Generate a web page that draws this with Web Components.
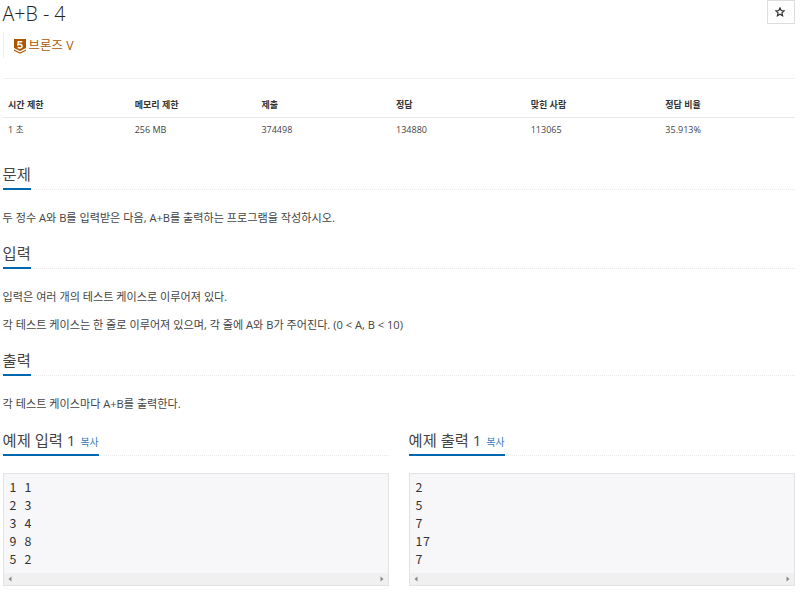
<!DOCTYPE html>
<html lang="ko">
<head>
<meta charset="utf-8">
<title>A+B - 4</title>
<style>
  body {
    margin: 0;
    background: #fff;
    color: #444;
    font-family: "Open Sans", "Noto Sans CJK KR", sans-serif;
    font-size: 10.5px;
  }
</style>
</head>
<body>
<problem-page>
  <problem-header slot="header" tier="브론즈 V">A+B - 4</problem-header>
  <problem-info slot="header"></problem-info>
  <problem-section heading="문제">
    <p>두 정수 A와 B를 입력받은 다음, A+B를 출력하는 프로그램을 작성하시오.</p>
  </problem-section>
  <problem-section heading="입력">
    <p>입력은 여러 개의 테스트 케이스로 이루어져 있다.</p>
    <p>각 테스트 케이스는 한 줄로 이루어져 있으며, 각 줄에 A와 B가 주어진다. (0 &lt; A, B &lt; 10)</p>
  </problem-section>
  <problem-section heading="출력">
    <p>각 테스트 케이스마다 A+B를 출력한다.</p>
  </problem-section>
  <sample-data slot="samples" heading="예제 입력 1">1 1
2 3
3 4
9 8
5 2</sample-data>
  <sample-data slot="samples" heading="예제 출력 1">2
5
7
17
7</sample-data>
</problem-page>

<script>
class ProblemPage extends HTMLElement {
  connectedCallback() {
    this.attachShadow({ mode: 'open' });
    this.shadowRoot.innerHTML = `
      <style>
        :host {
          display: block;
          box-sizing: border-box;
          height: 592px;
          padding: 0 5.4px 0 2.6px;
          overflow: hidden;
        }

        .samples {
          display: grid;
          grid-template-columns: 1fr 1fr;
          gap: 20px;
        }
      </style>
      <slot name="header"></slot>
      <slot></slot>
      <div class="samples"><slot name="samples"></slot></div>
    `;
  }
}
customElements.define('problem-page', ProblemPage);

class ProblemHeader extends HTMLElement {
  connectedCallback() {
    this.attachShadow({ mode: 'open' });
    this.shadowRoot.innerHTML = `
      <style>
        :host {
          display: flex;
          justify-content: space-between;
          align-items: flex-start;
          box-sizing: border-box;
          height: 79px;
          border-bottom: 1px solid #f0f0f0;
        }

        h1 {
          margin: 0;
          height: 32px;
          font-size: 19.6px;
          font-weight: 300;
          line-height: 27px;
          color: #222;
        }

        .tier {
          display: flex;
          align-items: center;
          gap: 3px;
          height: 26px;
          padding-left: 10px;
          border-left: 1px solid #eee;
          font-size: 12.3px;
          line-height: 16px;
          color: #ad5600;
        }

        .tier svg {
          margin-top: 2px;
        }

        .tier span {
          margin-top: 2px;
          letter-spacing: .15px;
        }

        .star {
          display: flex;
          align-items: center;
          justify-content: center;
          box-sizing: border-box;
          width: 28px;
          height: 24px;
          margin: 0;
          padding: 0 2px 0 0;
          border: 1px solid #ddd;
          background: #fff;
        }
      </style>
      <div>
        <h1><slot></slot></h1>
        <div class="tier">
          <svg width="12" height="15" viewBox="0 0 12 15">
            <path d="M0 0H12V9L6 12L0 9Z" fill="#ad5600"/>
            <path d="M0 10.4L6 13.4L12 10.4V11.7L6 14.7L0 11.7Z" fill="#ad5600"/>
            <path d="M8.3 2.7H4.3L4 5.7C5.2 5.2 8.1 5 8.1 7.1C8.1 9.3 5.1 9.3 3.7 8.4" fill="none" stroke="#fff" stroke-width="1.5"/>
          </svg>
          <span>${this.getAttribute('tier')}</span>
        </div>
      </div>
      <button class="star" aria-label="즐겨찾기">
        <svg width="10" height="10" viewBox="0 0 10 10">
          <path d="M5 .9L6.2 3.5L9.1 3.8L7 5.8L7.6 8.8L5 7.3L2.4 8.8L3 5.8L.9 3.8L3.8 3.5Z" fill="none" stroke="#333" stroke-width="1.2"/>
        </svg>
      </button>
    `;
  }
}
customElements.define('problem-header', ProblemHeader);

class ProblemInfo extends HTMLElement {
  connectedCallback() {
    this.attachShadow({ mode: 'open' });
    this.shadowRoot.innerHTML = `
      <style>
        :host {
          display: block;
          padding-top: 14px;
          margin-bottom: 19px;
        }

        table {
          width: 100%;
          table-layout: fixed;
          border-collapse: collapse;
          font-size: 9px;
        }

        th, td {
          box-sizing: border-box;
          height: 24px;
          padding: 0 5.4px;
          text-align: left;
          line-height: 12px;
        }

        th {
          border-bottom: 1px solid #e8e8e8;
          font-weight: 700;
          color: #333;
        }

        td {
          padding-top: 1px;
        }
      </style>
      <table>
        <colgroup>
          <col style="width: 16%"><col style="width: 16%"><col style="width: 17%">
          <col style="width: 17%"><col style="width: 17%"><col style="width: 17%">
        </colgroup>
        <thead>
          <tr><th>시간 제한</th><th>메모리 제한</th><th>제출</th><th>정답</th><th>맞힌 사람</th><th>정답 비율</th></tr>
        </thead>
        <tbody>
          <tr><td>1 초</td><td>256 MB</td><td>374498</td><td>134880</td><td>113065</td><td>35.913%</td></tr>
        </tbody>
      </table>
    `;
  }
}
customElements.define('problem-info', ProblemInfo);

// Dotted rule across the column with a blue line under the title
class SectionHeadline extends HTMLElement {
  connectedCallback() {
    this.attachShadow({ mode: 'open' });
    this.shadowRoot.innerHTML = `
      <style>
        :host {
          display: flex;
          height: 29px;
          border-bottom: 1px dotted #e8e8e8;
        }

        h2 {
          box-sizing: border-box;
          height: 30px;
          margin: 0;
          border-bottom: 2px solid #0067b0;
          font-size: 15.3px;
          font-weight: 400;
          line-height: 28.4px;
          color: #444;
          white-space: nowrap;
        }
      </style>
      <h2><slot></slot></h2>
    `;
  }
}
customElements.define('section-headline', SectionHeadline);

class ProblemSection extends HTMLElement {
  connectedCallback() {
    this.attachShadow({ mode: 'open' });
    this.shadowRoot.innerHTML = `
      <style>
        :host {
          display: block;
          margin-bottom: 11.7px;
        }

        .text {
          padding-top: 17.5px;
        }

        ::slotted(p) {
          margin: 0 0 8px;
          font-size: 11.12px;
          line-height: 20px;
          white-space: nowrap;
        }
      </style>
      <section-headline>${this.getAttribute('heading')}</section-headline>
      <div class="text"><slot></slot></div>
    `;
  }
}
customElements.define('problem-section', ProblemSection);

class SampleData extends HTMLElement {
  connectedCallback() {
    this.attachShadow({ mode: 'open' });
    this.shadowRoot.innerHTML = `
      <style>
        :host {
          display: block;
          min-width: 0;
        }

        a {
          margin-left: 1px;
          font-size: 9.8px;
          color: #337ab7;
        }

        .box {
          box-sizing: border-box;
          height: 113px;
          margin-top: 17px;
          border: 1px solid #e3e3e6;
          background: #f7f7f9;
          display: flex;
          flex-direction: column;
          justify-content: space-between;
        }

        pre {
          margin: 0;
          padding: 5.4px 6px 0;
          font-family: "Noto Sans CJK KR", sans-serif;
          font-size: 12.4px;
          line-height: 17.9px;
          letter-spacing: .55px;
          word-spacing: 3.4px;
          color: #333;
        }

        .scroll {
          display: flex;
          align-items: center;
          justify-content: space-between;
          height: 12px;
          padding: 0 4px;
          background: #f0f0f0;
        }
      </style>
      <section-headline>${this.getAttribute('heading')} <a>복사</a></section-headline>
      <div class="box">
        <pre><slot></slot></pre>
        <div class="scroll">
          <svg width="4" height="6"><path d="M3.5 .5V5.5L.5 3Z" fill="#888"/></svg>
          <svg width="4" height="6"><path d="M.5 .5V5.5L3.5 3Z" fill="#888"/></svg>
        </div>
      </div>
    `;
  }
}
customElements.define('sample-data', SampleData);
</script>
</body>
</html>
